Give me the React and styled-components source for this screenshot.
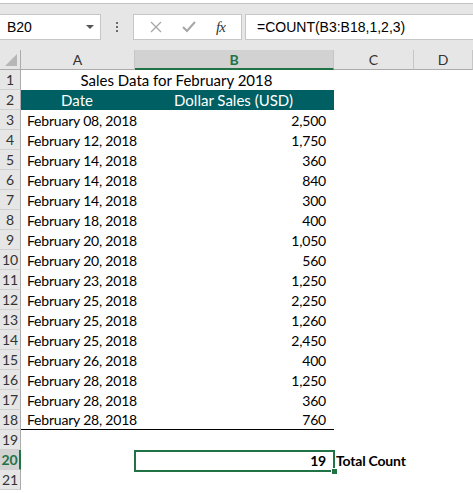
import React from 'react';
import styled, { createGlobalStyle, css } from 'styled-components';

const GREEN = '#217346';
const HEAD_BG = '#e6e6e6';

const GlobalStyle = createGlobalStyle`
  html, body { margin: 0; padding: 0; background: #fff; }
  body { font-family: Lato, "Liberation Sans", sans-serif; overflow: hidden; }
`;

const Page = styled.div`
  width: 473px;
  height: 493px;
  overflow: hidden;
  background: #fff;
`;

const TopStrip = styled.div`
  height: 3px;
  background: #fff;
  border-bottom: 1px solid #c2c2c2;
`;

const FormulaArea = styled.div`
  height: 46px;
  background: ${HEAD_BG};
  display: flex;
  align-items: flex-start;
  padding-top: 10px;
  box-sizing: border-box;
`;

const NameBox = styled.div`
  width: 101px;
  height: 26px;
  box-sizing: border-box;
  background: #fff;
  border: 1px solid #c6c6c6;
  border-left: none;
  display: flex;
  align-items: center;
  justify-content: space-between;
  padding: 0 6px 0 7px;
  font-family: "Liberation Sans", sans-serif;
  font-size: 14px;
  color: #000;
`;

const Caret = styled.span`
  width: 0;
  height: 0;
  border-left: 4px solid transparent;
  border-right: 4px solid transparent;
  border-top: 4px solid #555;
`;

const Dots = styled.div`
  width: 32px;
  height: 26px;
  display: flex;
  flex-direction: column;
  align-items: center;
  justify-content: center;
  gap: 2px;
  span { width: 2px; height: 2px; background: #6a6a6a; }
`;

const Buttons = styled.div`
  width: 109px;
  height: 26px;
  box-sizing: border-box;
  background: #fff;
  border: 1px solid #c6c6c6;
  display: flex;
  align-items: center;
  justify-content: space-around;
  padding: 0 6px;
  margin-right: 3px;
`;

const Fx = styled.span`
  font-family: "Liberation Serif", serif;
  font-style: italic;
  font-size: 15px;
  color: #333;
  letter-spacing: -1px;
`;

const FormulaBox = styled.div`
  flex: 1;
  height: 26px;
  box-sizing: border-box;
  background: #fff;
  border: 1px solid #c6c6c6;
  border-right: none;
  display: flex;
  align-items: center;
  padding-left: 11px;
  font-family: "Liberation Sans", sans-serif;
  font-size: 14px;
  color: #000;
`;

const Sheet = styled.div`
  display: grid;
  grid-template-columns: 21px 114px 199px 80px 1fr;
  grid-auto-rows: 20px;
`;

const Corner = styled.div`
  background: ${HEAD_BG};
  border-right: 1px solid #ababab;
  border-bottom: 1px solid #ababab;
  box-sizing: border-box;
  position: relative;
  &::after {
    content: '';
    position: absolute;
    right: 3px;
    bottom: 3px;
    border-left: 12px solid transparent;
    border-bottom: 12px solid #b6b6b6;
  }
`;

const ColHead = styled.div`
  background: ${p => (p.$active ? '#d2d2d2' : HEAD_BG)};
  border-right: 1px solid #c6c6c6;
  border-bottom: ${p => (p.$active ? `2px solid ${GREEN}` : '1px solid #ababab')};
  box-sizing: border-box;
  display: flex;
  align-items: center;
  justify-content: center;
  font-size: 14px;
  color: ${p => (p.$active ? GREEN : '#333')};
  font-weight: ${p => (p.$active ? 700 : 400)};
`;

const RowHead = styled.div`
  background: ${p => (p.$active ? '#d2d2d2' : HEAD_BG)};
  border-right: ${p => (p.$active ? `2px solid ${GREEN}` : '1px solid #ababab')};
  border-bottom: 1px solid #d0d0d0;
  box-sizing: border-box;
  display: flex;
  align-items: center;
  justify-content: center;
  font-size: 14px;
  color: ${p => (p.$active ? GREEN : '#333')};
  font-weight: ${p => (p.$active ? 700 : 400)};
`;

const Cell = styled.div`
  box-sizing: border-box;
  display: flex;
  align-items: center;
  padding: 0 8px 0 6px;
  font-size: 14px;
  letter-spacing: -0.2px;
  color: #000;
  white-space: nowrap;
  justify-content: ${p => (p.$align === 'right' ? 'flex-end' : p.$align === 'center' ? 'center' : 'flex-start')};
  grid-column: ${p => p.$span || 'auto'};
  ${p => p.$head && css`
    background: #005f63;
    color: #fff;
    font-size: 15px;
    letter-spacing: 0;
  `}
  ${p => p.$title && css`
    font-size: 15px;
    letter-spacing: 0;
  `}
  ${p => p.$bottom && css`
    border-bottom: 1px solid #000;
  `}
  ${p => p.$bold && css`font-weight: 700;`}
  ${p => p.$tight && css`padding-left: 2px;`}
`;

const Selected = styled(Cell)`
  position: relative;
  &::before {
    content: '';
    position: absolute;
    left: -1px;
    top: 0;
    right: -1px;
    bottom: -2px;
    border: 2px solid ${GREEN};
  }
  &::after {
    content: '';
    position: absolute;
    right: -4px;
    bottom: -5px;
    width: 5px;
    height: 5px;
    background: ${GREEN};
    border: 1px solid #fff;
  }
`;

const rows = [
  ['February 08, 2018', '2,500'],
  ['February 12, 2018', '1,750'],
  ['February 14, 2018', '360'],
  ['February 14, 2018', '840'],
  ['February 14, 2018', '300'],
  ['February 18, 2018', '400'],
  ['February 20, 2018', '1,050'],
  ['February 20, 2018', '560'],
  ['February 23, 2018', '1,250'],
  ['February 25, 2018', '2,250'],
  ['February 25, 2018', '1,260'],
  ['February 25, 2018', '2,450'],
  ['February 26, 2018', '400'],
  ['February 28, 2018', '1,250'],
  ['February 28, 2018', '360'],
  ['February 28, 2018', '760'],
];

const XIcon = () => (
  <svg width="12" height="12" viewBox="0 0 12 12">
    <path d="M1 1L11 11M11 1L1 11" stroke="#a6a6a6" strokeWidth="1.3" fill="none" />
  </svg>
);

const CheckIcon = () => (
  <svg width="14" height="12" viewBox="0 0 14 12">
    <path d="M1 6L5 10L13 1" stroke="#a6a6a6" strokeWidth="2" fill="none" />
  </svg>
);

export default function App() {
  return (
    <Page>
      <GlobalStyle />
      <TopStrip />
      <FormulaArea>
        <NameBox>
          B20
          <Caret />
        </NameBox>
        <Dots><span /><span /><span /></Dots>
        <Buttons>
          <XIcon />
          <CheckIcon />
          <Fx>fx</Fx>
        </Buttons>
        <FormulaBox>=COUNT(B3:B18,1,2,3)</FormulaBox>
      </FormulaArea>
      <Sheet>
        <Corner />
        <ColHead>A</ColHead>
        <ColHead $active>B</ColHead>
        <ColHead>C</ColHead>
        <ColHead>D</ColHead>

        <RowHead>1</RowHead>
        <Cell $span="span 2" $align="center" $title>Sales Data for February 2018</Cell>
        <Cell /><Cell />

        <RowHead>2</RowHead>
        <Cell $head $align="center">Date</Cell>
        <Cell $head $align="center">Dollar Sales (USD)</Cell>
        <Cell /><Cell />

        {rows.map(([d, v], i) => (
          <React.Fragment key={i}>
            <RowHead>{i + 3}</RowHead>
            <Cell $bottom={i === rows.length - 1}>{d}</Cell>
            <Cell $align="right" $bottom={i === rows.length - 1}>{v}</Cell>
            <Cell /><Cell />
          </React.Fragment>
        ))}

        <RowHead>19</RowHead>
        <Cell /><Cell /><Cell /><Cell />

        <RowHead $active>20</RowHead>
        <Cell />
        <Selected $align="right" $bold>19</Selected>
        <Cell $bold $tight $span="span 2">Total Count</Cell>

        <RowHead>21</RowHead>
        <Cell /><Cell /><Cell /><Cell />
      </Sheet>
    </Page>
  );
}
